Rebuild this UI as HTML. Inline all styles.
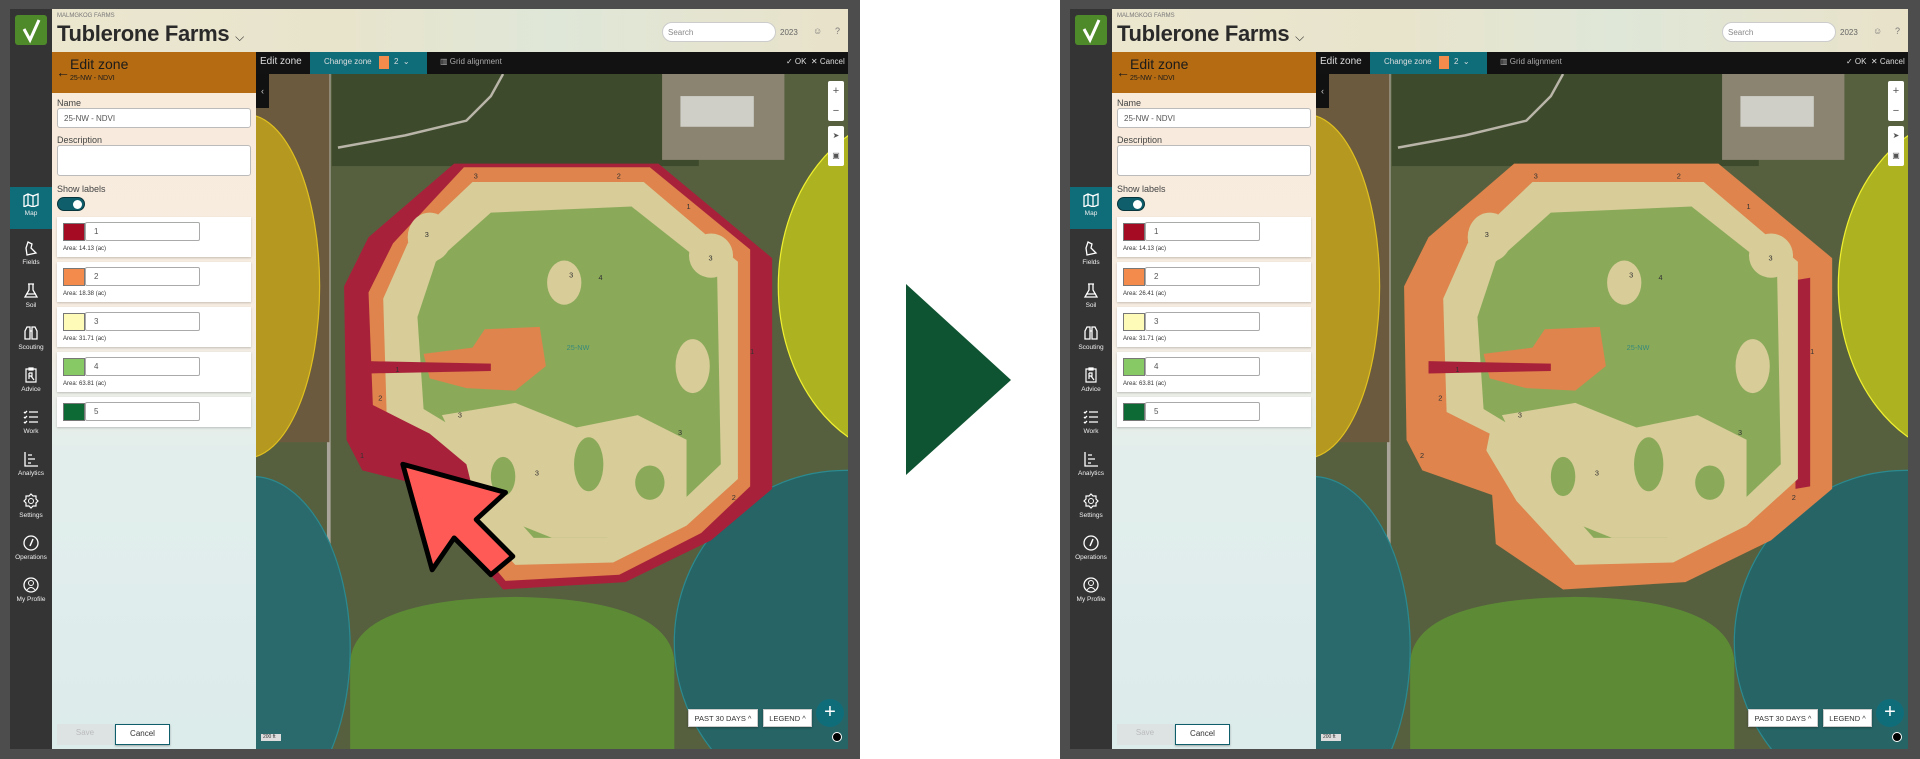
<!DOCTYPE html>
<html><head><meta charset="utf-8"><style>
*{box-sizing:border-box;margin:0;padding:0}
html,body{width:1920px;height:759px;overflow:hidden}
body{background:#fff;position:relative;font-family:"Liberation Sans",sans-serif}
.pan{position:absolute;top:0;width:860px;height:759px;background:#4d4d4d;overflow:hidden}
.in{position:absolute;left:10px;top:9px;width:838px;height:740px;overflow:hidden}
.a{position:absolute;white-space:nowrap}
.hdr{left:0;top:0;width:838px;height:43px;background:linear-gradient(90deg,#ece6cf,#e8e4cc 40%,#dfe7d8 65%,#e9e2c9)}
.side{left:0;top:0;width:42px;height:740px;background:#353434}
.logo{left:5px;top:6px;width:32px;height:30px;background:#4e8a2a;border-radius:3px}
.form{left:42px;top:84px;width:204px;height:656px;background:linear-gradient(180deg,#f8ebdc 0%,#f6ece1 35%,#e2eeec 55%,#dceceb 100%)}
.orange{left:42px;top:43px;width:204px;height:41px;background:#b46b12;color:#1b1b1b}
.tb{left:246px;top:43px;width:592px;height:22px;background:#121212;color:#ddd;font-size:10px}
.lbl{font-size:9px;color:#444}
.inp{background:#fff;border:1px solid #bbb;border-radius:3px;font-size:8px;color:#555;padding:5px 6px}
.card{left:47px;width:194px;height:40px;background:#fff;box-shadow:0 1px 2px rgba(0,0,0,.2)}
.sw{position:absolute;left:6px;top:6px;width:22px;height:18px;border:1px solid #777}
.ci{position:absolute;left:28px;top:5px;width:115px;height:19px;background:#fff;border:1px solid #aaa;border-radius:2px;font-size:8px;padding:4px 8px;color:#555}
.ar{position:absolute;left:6px;top:29px;font-size:6px;color:#333}
.si{left:0;width:42px;text-align:center;color:#eee;font-size:6.5px}
.si svg{display:block;margin:0 auto 3px}
.btn{background:#fff;font-size:8px;color:#333;text-align:center;line-height:18px;border:1px solid #ccc;box-shadow:0 1px 2px rgba(0,0,0,.3)}
</style></head><body>

<!-- LEFT PANEL -->
<div class="pan" style="left:0">
<div class="in">
 <div class="a hdr"></div>
 <div class="a" style="left:47px;top:4px;font-size:6px;color:#777">MALMGKOG FARMS</div>
 <div class="a" style="left:47px;top:12px;font-size:22px;font-weight:bold;color:#2a2a2a;letter-spacing:-0.3px">Tublerone Farms <span style="font-size:12px;font-weight:normal">⌵</span></div>
 <div class="a" style="left:652px;top:13px;width:114px;height:20px;background:#fff;border:1px solid #ccc;border-radius:10px;font-size:8px;color:#888;padding:5px 5px">Search</div>
 <div class="a" style="left:770px;top:19px;font-size:8px;color:#666">2023</div>
 <div class="a" style="left:803px;top:17px;font-size:9px;color:#777">☺</div>
 <div class="a" style="left:825px;top:17px;font-size:9px;color:#777">?</div>

 <div class="a side"></div>
 <div class="a logo"><svg width="32" height="30"><path d="M9 14 L15 25 L24 5" stroke="#fff" stroke-width="3" fill="none"/></svg></div>
 <div class="a si" style="top:178px;height:42px;background:#0f6d7a;padding-top:6px"><svg width="16" height="14"><path d="M1 3 L5 1 L10 3 L15 1 L15 12 L10 14 L5 12 L1 14Z M5 1 V12 M10 3 V14" stroke="#fff" fill="none" stroke-width="1.3"/></svg>Map</div>
 <div class="a si" style="top:232px"><svg width="16" height="15"><path d="M5 1 L9 3 L8 7 L13 12 L4 14 L3 7Z" stroke="#fff" fill="none" stroke-width="1.3"/></svg>Fields</div>
 <div class="a si" style="top:274px"><svg width="16" height="16"><path d="M5 1 H11 M6 1 V7 L2 14 H14 L10 7 V1 M3 11 H13" stroke="#fff" fill="none" stroke-width="1.3"/></svg>Soil</div>
 <div class="a si" style="top:316px"><svg width="16" height="16"><path d="M2 14 V6 L4 2 H7 V14Z M9 14 V2 H12 L14 6 V14Z M7 6 H9" stroke="#fff" fill="none" stroke-width="1.3"/></svg>Scouting</div>
 <div class="a si" style="top:358px"><svg width="16" height="16"><path d="M3 2 H13 V15 H3Z M6 1 H10 V3 H6Z M6 6 V12 M6 6 H9 L9 9 H6 M8 9 L11 13" stroke="#fff" fill="none" stroke-width="1.2"/></svg>Advice</div>
 <div class="a si" style="top:400px"><svg width="16" height="16"><path d="M1 3 L2 4 L4 2 M6 3 H15 M1 8 L2 9 L4 7 M6 8 H15 M1 13 L2 14 L4 12 M6 13 H15" stroke="#fff" fill="none" stroke-width="1.3"/></svg>Work</div>
 <div class="a si" style="top:442px"><svg width="16" height="16"><path d="M2 1 V15 H15 M5 4 H9 M5 8 H12 M5 12 H8" stroke="#fff" fill="none" stroke-width="1.3"/></svg>Analytics</div>
 <div class="a si" style="top:484px"><svg width="16" height="16"><circle cx="8" cy="8" r="2.5" stroke="#fff" fill="none"/><path d="M8 1 L10 3 L13 3 L13 6 L15 8 L13 10 L13 13 L10 13 L8 15 L6 13 L3 13 L3 10 L1 8 L3 6 L3 3 L6 3Z" stroke="#fff" fill="none" stroke-width="1.2"/></svg>Settings</div>
 <div class="a si" style="top:526px"><svg width="16" height="16"><circle cx="8" cy="8" r="7" stroke="#fff" fill="none" stroke-width="1.3"/><path d="M10 4 L7 11" stroke="#fff" stroke-width="1.5"/></svg>Operations</div>
 <div class="a si" style="top:568px"><svg width="16" height="16"><circle cx="8" cy="8" r="7" stroke="#fff" fill="none" stroke-width="1.3"/><circle cx="8" cy="6" r="2.5" stroke="#fff" fill="none"/><path d="M4 13 Q8 8 12 13" stroke="#fff" fill="none"/></svg>My Profile</div>

 <div class="a orange"><div class="a" style="left:4px;top:12px;font-size:14px">←</div><div class="a" style="left:18px;top:4px;font-size:14px">Edit zone</div><div class="a" style="left:18px;top:23px;font-size:7px">25-NW - NDVI</div></div>
 <div class="a form"></div>
 <div class="a lbl" style="left:47px;top:89px">Name</div>
 <div class="a inp" style="left:47px;top:99px;width:194px;height:20px">25-NW - NDVI</div>
 <div class="a lbl" style="left:47px;top:126px">Description</div>
 <div class="a inp" style="left:47px;top:136px;width:194px;height:31px"></div>
 <div class="a lbl" style="left:47px;top:175px">Show labels</div>
 <div class="a" style="left:47px;top:188px;width:28px;height:14px;background:#0e5e6b;border-radius:7px;border:1px solid #08343b"><div style="position:absolute;right:2px;top:2px;width:9px;height:9px;border-radius:50%;background:#fff"></div></div>
 <div class="a card" style="top:208px"><div class="sw" style="background:#a50b22"></div><div class="ci">1</div><div class="ar">Area: 14.13 (ac)</div></div>
 <div class="a card" style="top:253px"><div class="sw" style="background:#f28b4c"></div><div class="ci">2</div><div class="ar">Area: 18.38 (ac)</div></div>
 <div class="a card" style="top:298px"><div class="sw" style="background:#fefbb8"></div><div class="ci">3</div><div class="ar">Area: 31.71 (ac)</div></div>
 <div class="a card" style="top:343px"><div class="sw" style="background:#86c965"></div><div class="ci">4</div><div class="ar">Area: 63.81 (ac)</div></div>
 <div class="a card" style="top:388px;height:30px"><div class="sw" style="background:#0d6a35"></div><div class="ci">5</div></div>
 <div class="a btn" style="left:47px;top:715px;width:56px;height:21px;background:#dde3e3;color:#bbb;border:none;box-shadow:none">Save</div>
 <div class="a btn" style="left:105px;top:715px;width:55px;height:21px;border:1.5px solid #0e5e6b">Cancel</div>

 <div class="a tb"><span class="a" style="left:4px;top:4px;font-size:10px">Edit zone</span>
  <div class="a" style="left:54px;top:0;width:117px;height:22px;background:#0f6d7a"><span class="a" style="left:14px;top:5px;font-size:8px">Change zone</span><div class="a" style="left:69px;top:4px;width:10px;height:13px;background:#f28b4c"></div><span class="a" style="left:84px;top:5px;font-size:8px">2 &nbsp;⌄</span></div>
  <span class="a" style="left:184px;top:5px;font-size:8px;color:#aaa">▥ Grid alignment</span>
  <span class="a" style="left:530px;top:5px;font-size:8px">✓ OK &nbsp;✕ Cancel</span></div>

 <svg class="a" style="left:246px;top:65px" width="592" height="675" viewBox="208 62 484 550" preserveAspectRatio="none">
  <rect x="208" y="62" width="484" height="550" fill="#56603f"/>
  <rect x="270" y="62" width="300" height="75" fill="#3d4a2c"/>
  <rect x="540" y="62" width="100" height="70" fill="#8a8470"/>
  <rect x="555" y="80" width="60" height="25" fill="#cfcfc8"/>
  <path d="M275 122 L330 112 L380 100 L400 80 L410 62" stroke="#b9b5a8" stroke-width="2" fill="none"/>
  <rect x="266" y="62" width="3" height="550" fill="#aaa59a"/>
  <rect x="208" y="62" width="60" height="300" fill="#6b5a3e"/>
  <ellipse cx="200" cy="235" rx="60" ry="140" fill="#b49820" stroke="#e0c020"/>
  <ellipse cx="745" cy="235" rx="110" ry="140" fill="#adb221" stroke="#f0f030"/>
  <path d="M285 612 L285 540 Q290 490 420 488 Q545 490 550 540 L550 612Z" fill="#5d8b35"/>
  <ellipse cx="205" cy="530" rx="80" ry="140" fill="#2b6a6c" stroke="#2a8a90"/>
  <ellipse cx="690" cy="525" rx="140" ry="140" fill="#266466" stroke="#2a8a90"/>
  <polygon points="370,135 537,135 630,212 630,400 580,442 510,476 410,482 335,395 295,385 282,360 280,235 300,195" fill="#a8213a"/>
  <polygon points="378,138 530,138 612,205 612,398 572,436 505,470 412,475 370,425 340,385 305,370 300,240 320,200" fill="#de844c"/>
  <polygon points="385,150 525,150 602,215 602,392 560,430 500,460 420,462 372,410 345,365 315,345 312,245 332,200" fill="#d8cc98"/>
  <polygon points="400,175 515,170 585,225 588,380 548,418 495,440 435,440 395,395 370,350 345,335 340,260 355,215" fill="#8aaa5a"/>
  <polygon points="360,340 420,330 470,350 520,340 560,360 560,410 520,440 450,440 400,420" fill="#d8cc98"/>
  <ellipse cx="460" cy="232" rx="14" ry="18" fill="#d8cc98"/>
  <ellipse cx="350" cy="195" rx="18" ry="20" fill="#d8cc98"/>
  <ellipse cx="565" cy="300" rx="14" ry="22" fill="#d8cc98"/>
  <ellipse cx="580" cy="210" rx="18" ry="18" fill="#d8cc98"/>
  <ellipse cx="480" cy="380" rx="12" ry="22" fill="#8aaa5a"/>
  <ellipse cx="410" cy="390" rx="10" ry="16" fill="#8aaa5a"/>
  <ellipse cx="530" cy="395" rx="12" ry="14" fill="#8aaa5a"/>
  <polygon points="395,270 440,268 445,300 420,320 380,318 350,310 345,290 385,285" fill="#de844c"/>
  <polygon points="300,296 400,298 400,304 300,306" fill="#a8213a"/>
  <polygon points="282,360 300,330 330,345 350,355 380,380 385,400 340,392 295,385" fill="#a8213a"/>
  <g font-size="6" fill="#333"><text x="386" y="147">3</text><text x="503" y="147">2</text><text x="560" y="172">1</text><text x="346" y="195">3</text><text x="464" y="228">3</text><text x="488" y="230">4</text><text x="578" y="214">3</text><text x="612" y="290">1</text><text x="322" y="305">1</text><text x="308" y="328">2</text><text x="373" y="342">3</text><text x="553" y="356">3</text><text x="293" y="375">1</text><text x="436" y="389">3</text><text x="597" y="409">2</text><text x="462" y="287" fill="#3a8a7a">25-NW</text></g>
  <polygon points="328,380 412,403 388,425 418,455 400,470 370,440 352,466" fill="#ff5a55" stroke="#000" stroke-width="4" stroke-linejoin="round"/>
 </svg>
 <div class="a" style="left:246px;top:65px;width:13px;height:34px;background:#111;color:#ccc;font-size:9px;text-align:center;line-height:34px">‹</div>
 <div class="a" style="left:818px;top:72px;width:16px;height:40px;background:#fff;border-radius:2px;font-size:11px;color:#555;text-align:center;line-height:20px">+<br>−</div>
 <div class="a" style="left:818px;top:117px;width:16px;height:40px;background:#fff;border-radius:2px;font-size:8px;color:#555;text-align:center;line-height:20px">➤<br>▣</div>
 <div class="a btn" style="left:678px;top:700px;width:70px;height:18px;font-size:7.5px;line-height:18px">PAST 30 DAYS ^</div>
 <div class="a btn" style="left:753px;top:700px;width:49px;height:18px;font-size:7.5px;line-height:18px">LEGEND ^</div>
 <div class="a" style="left:806px;top:690px;width:28px;height:28px;border-radius:50%;background:#0f6d7a;color:#fff;font-size:20px;text-align:center;line-height:27px">+</div>
 <div class="a" style="left:822px;top:723px;width:10px;height:10px;border-radius:50%;background:#000;border:1.5px solid #fff"></div>
 <div class="a" style="left:251px;top:725px;width:20px;height:7px;background:#ddd;font-size:5px;color:#333;padding-left:2px">200 ft</div>
</div></div>

<!-- ARROW -->
<svg class="a" style="left:0;top:0" width="1920" height="759"><polygon points="906,284 1011,380 906,475" fill="#0f5432"/></svg>

<!-- RIGHT PANEL -->
<div class="pan" style="left:1060px">
<div class="in">
 <div class="a hdr"></div>
 <div class="a" style="left:47px;top:4px;font-size:6px;color:#777">MALMGKOG FARMS</div>
 <div class="a" style="left:47px;top:12px;font-size:22px;font-weight:bold;color:#2a2a2a;letter-spacing:-0.3px">Tublerone Farms <span style="font-size:12px;font-weight:normal">⌵</span></div>
 <div class="a" style="left:652px;top:13px;width:114px;height:20px;background:#fff;border:1px solid #ccc;border-radius:10px;font-size:8px;color:#888;padding:5px 5px">Search</div>
 <div class="a" style="left:770px;top:19px;font-size:8px;color:#666">2023</div>
 <div class="a" style="left:803px;top:17px;font-size:9px;color:#777">☺</div>
 <div class="a" style="left:825px;top:17px;font-size:9px;color:#777">?</div>

 <div class="a side"></div>
 <div class="a logo"><svg width="32" height="30"><path d="M9 14 L15 25 L24 5" stroke="#fff" stroke-width="3" fill="none"/></svg></div>
 <div class="a si" style="top:178px;height:42px;background:#0f6d7a;padding-top:6px"><svg width="16" height="14"><path d="M1 3 L5 1 L10 3 L15 1 L15 12 L10 14 L5 12 L1 14Z M5 1 V12 M10 3 V14" stroke="#fff" fill="none" stroke-width="1.3"/></svg>Map</div>
 <div class="a si" style="top:232px"><svg width="16" height="15"><path d="M5 1 L9 3 L8 7 L13 12 L4 14 L3 7Z" stroke="#fff" fill="none" stroke-width="1.3"/></svg>Fields</div>
 <div class="a si" style="top:274px"><svg width="16" height="16"><path d="M5 1 H11 M6 1 V7 L2 14 H14 L10 7 V1 M3 11 H13" stroke="#fff" fill="none" stroke-width="1.3"/></svg>Soil</div>
 <div class="a si" style="top:316px"><svg width="16" height="16"><path d="M2 14 V6 L4 2 H7 V14Z M9 14 V2 H12 L14 6 V14Z M7 6 H9" stroke="#fff" fill="none" stroke-width="1.3"/></svg>Scouting</div>
 <div class="a si" style="top:358px"><svg width="16" height="16"><path d="M3 2 H13 V15 H3Z M6 1 H10 V3 H6Z M6 6 V12 M6 6 H9 L9 9 H6 M8 9 L11 13" stroke="#fff" fill="none" stroke-width="1.2"/></svg>Advice</div>
 <div class="a si" style="top:400px"><svg width="16" height="16"><path d="M1 3 L2 4 L4 2 M6 3 H15 M1 8 L2 9 L4 7 M6 8 H15 M1 13 L2 14 L4 12 M6 13 H15" stroke="#fff" fill="none" stroke-width="1.3"/></svg>Work</div>
 <div class="a si" style="top:442px"><svg width="16" height="16"><path d="M2 1 V15 H15 M5 4 H9 M5 8 H12 M5 12 H8" stroke="#fff" fill="none" stroke-width="1.3"/></svg>Analytics</div>
 <div class="a si" style="top:484px"><svg width="16" height="16"><circle cx="8" cy="8" r="2.5" stroke="#fff" fill="none"/><path d="M8 1 L10 3 L13 3 L13 6 L15 8 L13 10 L13 13 L10 13 L8 15 L6 13 L3 13 L3 10 L1 8 L3 6 L3 3 L6 3Z" stroke="#fff" fill="none" stroke-width="1.2"/></svg>Settings</div>
 <div class="a si" style="top:526px"><svg width="16" height="16"><circle cx="8" cy="8" r="7" stroke="#fff" fill="none" stroke-width="1.3"/><path d="M10 4 L7 11" stroke="#fff" stroke-width="1.5"/></svg>Operations</div>
 <div class="a si" style="top:568px"><svg width="16" height="16"><circle cx="8" cy="8" r="7" stroke="#fff" fill="none" stroke-width="1.3"/><circle cx="8" cy="6" r="2.5" stroke="#fff" fill="none"/><path d="M4 13 Q8 8 12 13" stroke="#fff" fill="none"/></svg>My Profile</div>

 <div class="a orange"><div class="a" style="left:4px;top:12px;font-size:14px">←</div><div class="a" style="left:18px;top:4px;font-size:14px">Edit zone</div><div class="a" style="left:18px;top:23px;font-size:7px">25-NW - NDVI</div></div>
 <div class="a form"></div>
 <div class="a lbl" style="left:47px;top:89px">Name</div>
 <div class="a inp" style="left:47px;top:99px;width:194px;height:20px">25-NW - NDVI</div>
 <div class="a lbl" style="left:47px;top:126px">Description</div>
 <div class="a inp" style="left:47px;top:136px;width:194px;height:31px"></div>
 <div class="a lbl" style="left:47px;top:175px">Show labels</div>
 <div class="a" style="left:47px;top:188px;width:28px;height:14px;background:#0e5e6b;border-radius:7px;border:1px solid #08343b"><div style="position:absolute;right:2px;top:2px;width:9px;height:9px;border-radius:50%;background:#fff"></div></div>
 <div class="a card" style="top:208px"><div class="sw" style="background:#a50b22"></div><div class="ci">1</div><div class="ar">Area: 14.13 (ac)</div></div>
 <div class="a card" style="top:253px"><div class="sw" style="background:#f28b4c"></div><div class="ci">2</div><div class="ar">Area: 26.41 (ac)</div></div>
 <div class="a card" style="top:298px"><div class="sw" style="background:#fefbb8"></div><div class="ci">3</div><div class="ar">Area: 31.71 (ac)</div></div>
 <div class="a card" style="top:343px"><div class="sw" style="background:#86c965"></div><div class="ci">4</div><div class="ar">Area: 63.81 (ac)</div></div>
 <div class="a card" style="top:388px;height:30px"><div class="sw" style="background:#0d6a35"></div><div class="ci">5</div></div>
 <div class="a btn" style="left:47px;top:715px;width:56px;height:21px;background:#dde3e3;color:#bbb;border:none;box-shadow:none">Save</div>
 <div class="a btn" style="left:105px;top:715px;width:55px;height:21px;border:1.5px solid #0e5e6b">Cancel</div>

 <div class="a tb"><span class="a" style="left:4px;top:4px;font-size:10px">Edit zone</span>
  <div class="a" style="left:54px;top:0;width:117px;height:22px;background:#0f6d7a"><span class="a" style="left:14px;top:5px;font-size:8px">Change zone</span><div class="a" style="left:69px;top:4px;width:10px;height:13px;background:#f28b4c"></div><span class="a" style="left:84px;top:5px;font-size:8px">2 &nbsp;⌄</span></div>
  <span class="a" style="left:184px;top:5px;font-size:8px;color:#aaa">▥ Grid alignment</span>
  <span class="a" style="left:530px;top:5px;font-size:8px">✓ OK &nbsp;✕ Cancel</span></div>

 <svg class="a" style="left:246px;top:65px" width="592" height="675" viewBox="208 62 484 550" preserveAspectRatio="none">
  <rect x="208" y="62" width="484" height="550" fill="#56603f"/>
  <rect x="270" y="62" width="300" height="75" fill="#3d4a2c"/>
  <rect x="540" y="62" width="100" height="70" fill="#8a8470"/>
  <rect x="555" y="80" width="60" height="25" fill="#cfcfc8"/>
  <path d="M275 122 L330 112 L380 100 L400 80 L410 62" stroke="#b9b5a8" stroke-width="2" fill="none"/>
  <rect x="266" y="62" width="3" height="550" fill="#aaa59a"/>
  <rect x="208" y="62" width="60" height="300" fill="#6b5a3e"/>
  <ellipse cx="200" cy="235" rx="60" ry="140" fill="#b49820" stroke="#e0c020"/>
  <ellipse cx="745" cy="235" rx="110" ry="140" fill="#adb221" stroke="#f0f030"/>
  <path d="M285 612 L285 540 Q290 490 420 488 Q545 490 550 540 L550 612Z" fill="#5d8b35"/>
  <ellipse cx="205" cy="530" rx="80" ry="140" fill="#2b6a6c" stroke="#2a8a90"/>
  <ellipse cx="690" cy="525" rx="140" ry="140" fill="#266466" stroke="#2a8a90"/>
  <polygon points="370,135 537,135 630,212 630,400 580,442 510,476 410,482 355,445 352,405 295,385 282,360 280,235 300,195" fill="#de844c"/>
  <polygon points="600,230 612,228 612,398 600,400" fill="#a8213a"/>
  <polygon points="385,150 525,150 602,215 602,392 560,430 500,460 420,462 372,410 345,365 315,345 312,245 332,200" fill="#d8cc98"/>
  <polygon points="400,175 515,170 585,225 588,380 548,418 495,440 435,440 395,395 370,350 345,335 340,260 355,215" fill="#8aaa5a"/>
  <polygon points="360,340 420,330 470,350 520,340 560,360 560,410 520,440 450,440 400,420" fill="#d8cc98"/>
  <ellipse cx="460" cy="232" rx="14" ry="18" fill="#d8cc98"/>
  <ellipse cx="350" cy="195" rx="18" ry="20" fill="#d8cc98"/>
  <ellipse cx="565" cy="300" rx="14" ry="22" fill="#d8cc98"/>
  <ellipse cx="580" cy="210" rx="18" ry="18" fill="#d8cc98"/>
  <ellipse cx="480" cy="380" rx="12" ry="22" fill="#8aaa5a"/>
  <ellipse cx="410" cy="390" rx="10" ry="16" fill="#8aaa5a"/>
  <ellipse cx="530" cy="395" rx="12" ry="14" fill="#8aaa5a"/>
  <polygon points="395,270 440,268 445,300 420,320 380,318 350,310 345,290 385,285" fill="#de844c"/>
  <polygon points="300,296 400,298 400,304 300,306" fill="#a8213a"/>
  <polygon points="282,360 300,330 330,345 350,355 345,380 295,385" fill="#de844c"/>
  <g font-size="6" fill="#333"><text x="386" y="147">3</text><text x="503" y="147">2</text><text x="560" y="172">1</text><text x="346" y="195">3</text><text x="464" y="228">3</text><text x="488" y="230">4</text><text x="578" y="214">3</text><text x="612" y="290">1</text><text x="322" y="305">1</text><text x="308" y="328">2</text><text x="373" y="342">3</text><text x="553" y="356">3</text><text x="293" y="375">2</text><text x="436" y="389">3</text><text x="597" y="409">2</text><text x="462" y="287" fill="#3a8a7a">25-NW</text></g>
 </svg>
 <div class="a" style="left:246px;top:65px;width:13px;height:34px;background:#111;color:#ccc;font-size:9px;text-align:center;line-height:34px">‹</div>
 <div class="a" style="left:818px;top:72px;width:16px;height:40px;background:#fff;border-radius:2px;font-size:11px;color:#555;text-align:center;line-height:20px">+<br>−</div>
 <div class="a" style="left:818px;top:117px;width:16px;height:40px;background:#fff;border-radius:2px;font-size:8px;color:#555;text-align:center;line-height:20px">➤<br>▣</div>
 <div class="a btn" style="left:678px;top:700px;width:70px;height:18px;font-size:7.5px;line-height:18px">PAST 30 DAYS ^</div>
 <div class="a btn" style="left:753px;top:700px;width:49px;height:18px;font-size:7.5px;line-height:18px">LEGEND ^</div>
 <div class="a" style="left:806px;top:690px;width:28px;height:28px;border-radius:50%;background:#0f6d7a;color:#fff;font-size:20px;text-align:center;line-height:27px">+</div>
 <div class="a" style="left:822px;top:723px;width:10px;height:10px;border-radius:50%;background:#000;border:1.5px solid #fff"></div>
 <div class="a" style="left:251px;top:725px;width:20px;height:7px;background:#ddd;font-size:5px;color:#333;padding-left:2px">200 ft</div>
</div></div>
</body></html>
